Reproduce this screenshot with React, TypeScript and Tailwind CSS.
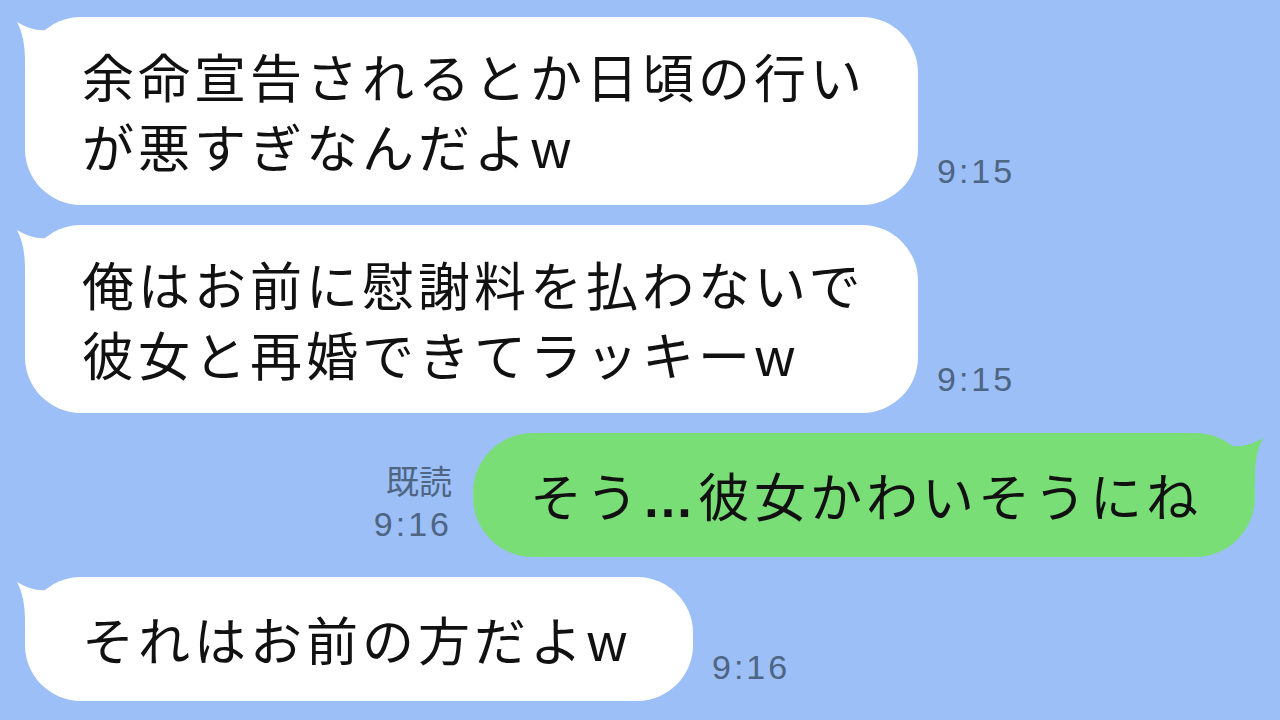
import React from 'react'

const msgFont = { fontFamily: '"Noto Sans CJK JP", "Noto Sans", sans-serif' }
const timeFont = { fontFamily: '"Liberation Sans", "Noto Sans CJK JP", sans-serif' }

function LeftTail() {
  return (
    <svg className="absolute -left-[10px] top-0" width="70" height="60" viewBox="0 0 70 60">
      <path d="M2 5 C12 11 22 14 32 13 C40 12 48 6 60 1 L60 52 L10 52 L10 44 C10 30 8 16 2 5 Z" fill="#ffffff" />
    </svg>
  )
}

function RightTail() {
  return (
    <svg className="absolute -right-[10px] top-0" width="70" height="60" viewBox="0 0 70 60">
      <path d="M68 5 C58 11 48 14 38 13 C30 12 22 6 10 1 L10 52 L60 52 L60 44 C60 30 62 16 68 5 Z" fill="#7ade76" />
    </svg>
  )
}

function Time({ t }: { t: string }) {
  return (
    <span className="mb-[17px] text-[34px] leading-none tracking-[3px] text-[#4e6583]" style={timeFont}>
      {t}
    </span>
  )
}

function LeftMsg({ lines, width, time, py }: { lines: string[]; width: string; time: string; py: string }) {
  return (
    <div className="flex items-end gap-[19px] pl-[25px]">
      <div className={`relative rounded-[56px] bg-white pl-[57px] ${py} ${width}`}>
        <LeftTail />
        <div className="relative text-[52px] leading-[70px] tracking-[4px] text-[#111111] whitespace-nowrap" style={msgFont}>
          {lines.map((l, i) => (
            <div key={i}>{l}</div>
          ))}
        </div>
      </div>
      <Time t={time} />
    </div>
  )
}

export default function App() {
  return (
    <div className="flex h-[720px] w-[1280px] flex-col gap-[20px] overflow-hidden bg-[#9cbff7] pt-[17px]">
      <LeftMsg
        lines={['余命宣告されるとか日頃の行い', 'が悪すぎなんだよw']}
        width="w-[893px]"
        py="py-[24px]"
        time="9:15"
      />
      <LeftMsg
        lines={['俺はお前に慰謝料を払わないで', '彼女と再婚できてラッキーw']}
        width="w-[893px]"
        py="py-[24px]"
        time="9:15"
      />

      <div className="flex items-end justify-end gap-[21px] pr-[25px]">
        <div className="mb-[15px] flex flex-col items-end text-[#4e6583]">
          <span className="mb-[6px] text-[33px] leading-[40px]" style={msgFont}>既読</span>
          <span className="text-[34px] leading-[36px] tracking-[3px]" style={timeFont}>9:16</span>
        </div>
        <div className="relative h-[124px] w-[782px] rounded-[60px] bg-[#7ade76] py-[27px] pl-[57px]">
          <RightTail />
          <div className="relative text-[52px] leading-[70px] tracking-[4px] text-[#111111] whitespace-nowrap" style={msgFont}>
            そう<span className="font-bold leading-none" style={timeFont}>…</span>彼女かわいそうにね
          </div>
        </div>
      </div>

      <LeftMsg lines={['それはお前の方だよw']} width="w-[668px]" py="py-[27px]" time="9:16" />
    </div>
  )
}
